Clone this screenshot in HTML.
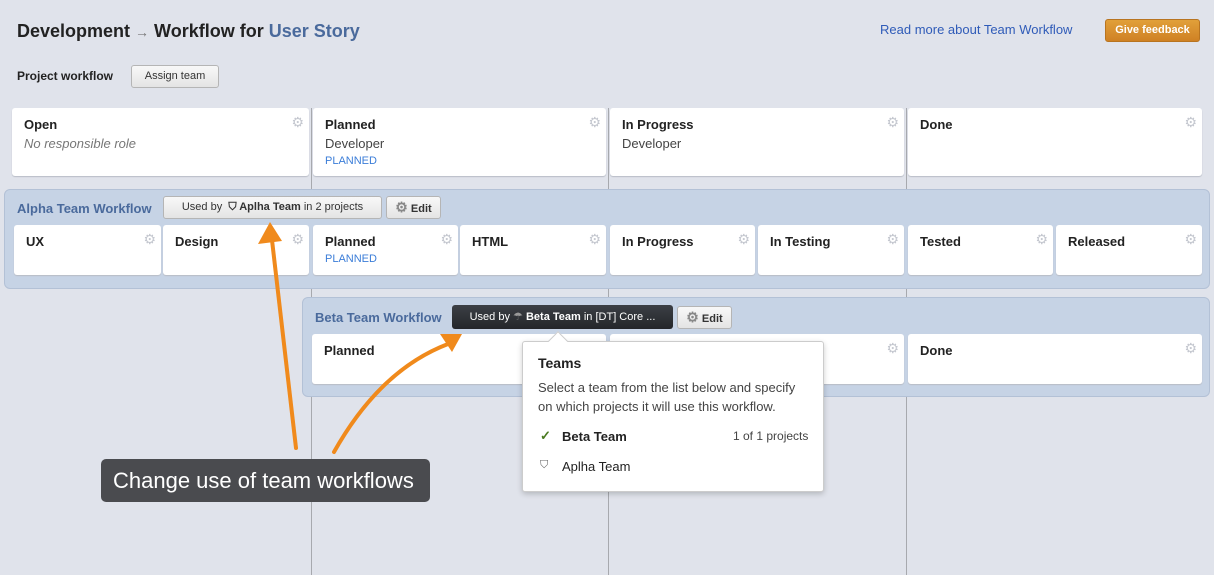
<!DOCTYPE html><html><head><style>
*{margin:0;padding:0;box-sizing:border-box}
body{width:1214px;height:575px;background:#e0e3eb;font-family:"Liberation Sans",sans-serif;position:relative;overflow:hidden;color:#222}
.a{position:absolute}
.vl{position:absolute;top:108px;width:1px;height:467px;background:#a7a9ae}
.card{position:absolute;background:#fff;border-radius:3px;box-shadow:0 1px 1px #b8bcc6;font-size:13px;padding:9px 12px}
.card b{font-weight:bold;color:#222;display:block}
.g{position:absolute;right:5px;top:6px;color:#c4c7cf;font-size:14px}
.sub{color:#444;margin-top:4px}
.pl{color:#3b7dd8;font-size:11px;margin-top:4px}
.panel{position:absolute;background:#c6d3e5;border:1px solid #b3c1d6;border-radius:6px}
.ht{position:absolute;color:#4a6a9c;font-weight:bold;font-size:13px}
.btn{position:absolute;background:linear-gradient(#f8f8f8,#e4e4e4);border:1px solid #b5b5b5;border-radius:3px;font-size:11px;color:#333;text-align:center}
</style></head><body>
<div class="vl" style="left:311px"></div><div class="vl" style="left:608px"></div><div class="vl" style="left:906px"></div>
<div class="a" style="left:17px;top:21px;font-size:18px;font-weight:bold">Development <span style="color:#777;font-weight:normal;font-size:14px">→</span> Workflow for <span style="color:#4a6a9c">User Story</span></div>
<div class="a" style="left:880px;top:22px;font-size:13px;color:#2f5bb8">Read more about Team Workflow</div>
<div class="a" style="left:1105px;top:19px;width:95px;height:23px;background:linear-gradient(#e1a03a,#cf8124);border:1px solid #b87420;border-radius:3px;color:#fff;font-size:11px;font-weight:bold;text-align:center;line-height:21px">Give feedback</div>
<div class="a" style="left:17px;top:69px;font-size:12px;font-weight:bold">Project workflow</div>
<div class="btn" style="left:131px;top:65px;width:88px;height:23px;line-height:21px">Assign team</div>

<div class="card" style="left:12px;top:108px;width:297px;height:68px"><b>Open</b><div class="sub" style="font-style:italic;color:#777">No responsible role</div><span class="g">⚙</span></div>
<div class="card" style="left:313px;top:108px;width:293px;height:68px"><b>Planned</b><div class="sub">Developer</div><div class="pl">PLANNED</div><span class="g">⚙</span></div>
<div class="card" style="left:610px;top:108px;width:294px;height:68px"><b>In Progress</b><div class="sub">Developer</div><span class="g">⚙</span></div>
<div class="card" style="left:908px;top:108px;width:294px;height:68px"><b>Done</b><span class="g">⚙</span></div>

<div class="panel" style="left:4px;top:189px;width:1206px;height:100px"></div>
<div class="ht" style="left:17px;top:201px">Alpha Team Workflow</div>
<div class="btn" style="left:163px;top:196px;width:219px;height:23px;line-height:21px">Used by &nbsp;<b>⛉ Aplha Team</b> in 2 projects</div>
<div class="btn" style="left:386px;top:196px;width:55px;height:23px;line-height:21px;font-weight:bold"><span style="color:#888;font-size:14px">⚙</span> Edit</div>
<div class="card" style="left:14px;top:225px;width:147px;height:50px"><b>UX</b><span class="g">⚙</span></div>
<div class="card" style="left:163px;top:225px;width:146px;height:50px"><b>Design</b><span class="g">⚙</span></div>
<div class="card" style="left:313px;top:225px;width:145px;height:50px"><b>Planned</b><div class="pl">PLANNED</div><span class="g">⚙</span></div>
<div class="card" style="left:460px;top:225px;width:146px;height:50px"><b>HTML</b><span class="g">⚙</span></div>
<div class="card" style="left:610px;top:225px;width:145px;height:50px"><b>In Progress</b><span class="g">⚙</span></div>
<div class="card" style="left:758px;top:225px;width:146px;height:50px"><b>In Testing</b><span class="g">⚙</span></div>
<div class="card" style="left:908px;top:225px;width:145px;height:50px"><b>Tested</b><span class="g">⚙</span></div>
<div class="card" style="left:1056px;top:225px;width:146px;height:50px"><b>Released</b><span class="g">⚙</span></div>

<div class="panel" style="left:302px;top:297px;width:908px;height:100px"></div>
<div class="ht" style="left:315px;top:310px">Beta Team Workflow</div>
<div class="a" style="left:452px;top:305px;width:221px;height:24px;background:linear-gradient(#3c3f45,#24262a);border-radius:3px;color:#fff;font-size:11px;line-height:24px;text-align:center">Used by <span style="color:#999">☂</span> <b>Beta Team</b> in [DT] Core ...</div>
<div class="btn" style="left:677px;top:306px;width:55px;height:23px;line-height:21px;font-weight:bold"><span style="color:#888;font-size:14px">⚙</span> Edit</div>
<div class="card" style="left:312px;top:334px;width:294px;height:50px"><b>Planned</b></div>
<div class="card" style="left:610px;top:334px;width:294px;height:50px"><span class="g">⚙</span></div>
<div class="card" style="left:908px;top:334px;width:294px;height:50px"><b>Done</b><span class="g">⚙</span></div>

<div class="a" style="left:522px;top:341px;width:302px;height:151px;background:#fff;border:1px solid #ccc;border-radius:3px;box-shadow:0 2px 6px rgba(0,0,0,.2)"></div>
<div class="a" style="left:551px;top:334px;width:14px;height:14px;background:#fff;transform:rotate(45deg);border-left:1px solid #ccc;border-top:1px solid #ccc"></div>
<div class="a" style="left:538px;top:355px;font-size:14px;font-weight:bold">Teams</div>
<div class="a" style="left:538px;top:378px;font-size:13px;color:#444;line-height:19px;width:274px">Select a team from the list below and specify on which projects it will use this workflow.</div>
<div class="a" style="left:540px;top:428px;font-size:13px;color:#4a7a20;font-weight:bold">✓</div>
<div class="a" style="left:562px;top:429px;font-size:13px;font-weight:bold">Beta Team</div>
<div class="a" style="left:733px;top:429px;font-size:12px;color:#444">1 of 1 projects</div>
<div class="a" style="left:540px;top:459px;font-size:11px;color:#666">⛉</div>
<div class="a" style="left:562px;top:459px;font-size:13px">Aplha Team</div>

<div class="a" style="left:101px;top:459px;width:329px;height:43px;background:#4a4b4f;border-radius:5px;color:#fff;font-size:22px;line-height:43px;padding-left:12px">Change use of team workflows</div>

<svg class="a" style="left:0;top:0" width="1214" height="575">
<g stroke="#f08a1c" stroke-width="4" fill="none" stroke-linecap="round"><path d="M296 448 L272 240"/><path d="M334 452 Q380 370 448 344"/></g>
<polygon points="270,222 258,244 282,241" fill="#f08a1c"/>
<polygon points="462,334 440,334 452,352" fill="#f08a1c"/>
</svg>
</body></html>
